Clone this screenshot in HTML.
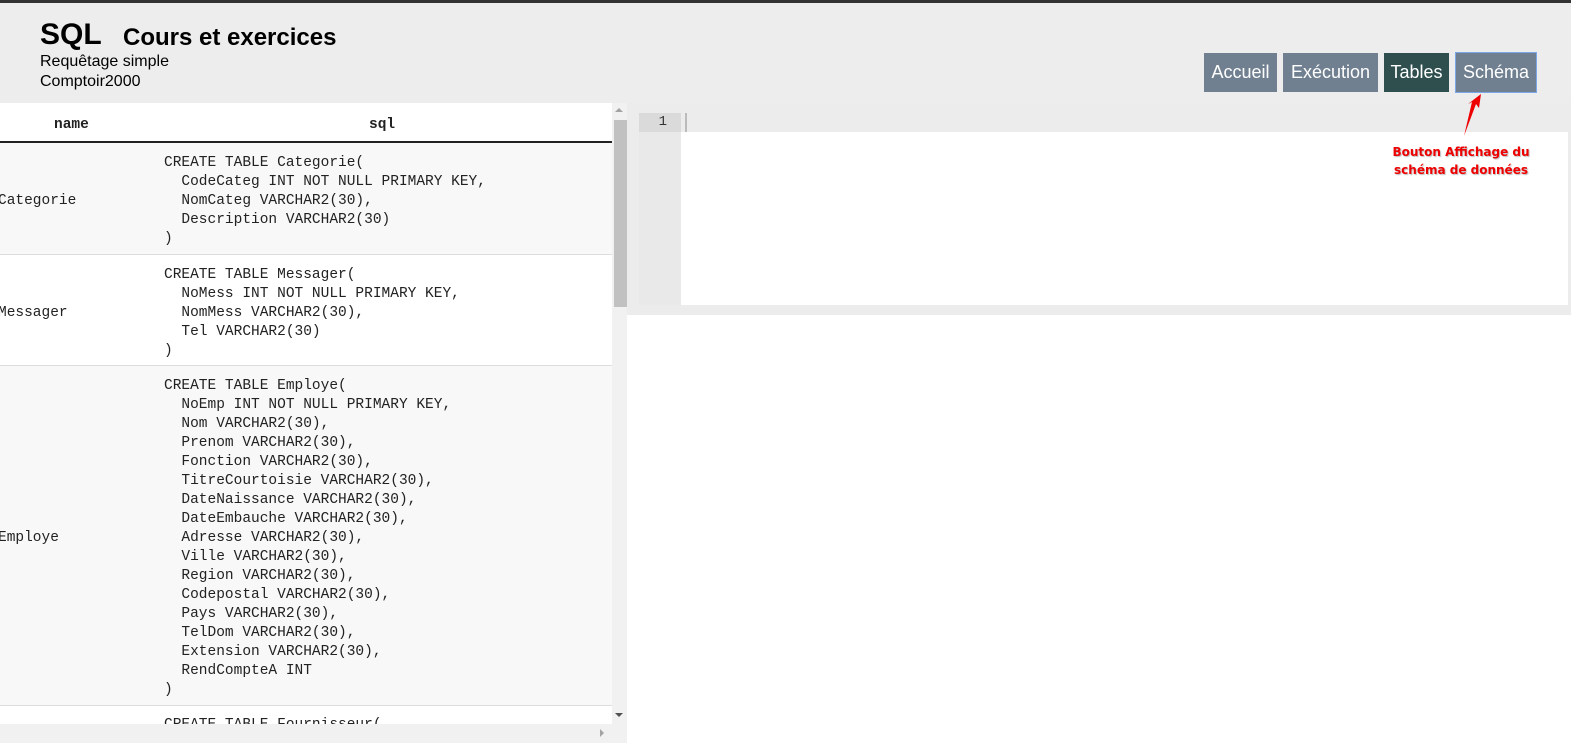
<!DOCTYPE html>
<html><head><meta charset="utf-8"><style>
body{margin:0;width:1571px;height:743px;overflow:hidden;background:#fff;font-family:"Liberation Sans",sans-serif;position:relative}
.abs{position:absolute}
.mono{font-family:"Liberation Mono",monospace;font-size:14.5px;line-height:19px;color:#222}
.btn{position:absolute;top:53px;height:39px;line-height:39px;color:#fff;font-size:18px;text-align:center;background:#708090}
</style></head><body>
<div class="abs" style="left:0;top:0;width:1571px;height:3px;background:#333"></div>
<div class="abs" style="left:0;top:3px;width:1571px;height:100px;background:#ededed"></div>
<div class="abs" style="left:40px;top:18px;font-size:30px;font-weight:bold">SQL</div>
<div class="abs" style="left:123px;top:24px;font-size:24px;font-weight:bold">Cours et exercices</div>
<div class="abs" style="left:40px;top:53px;font-size:16px">Requêtage simple</div>
<div class="abs" style="left:40px;top:73px;font-size:16px">Comptoir2000</div>
<div class="btn" style="left:1204px;width:73px">Accueil</div>
<div class="btn" style="left:1283px;width:95px">Exécution</div>
<div class="btn" style="left:1384px;width:65px;background:#2f4f4f">Tables</div>
<div class="btn" style="left:1455px;width:80px;border:1px solid #7aa7e8;top:52px">Schéma</div>

<!-- table panel -->
<div class="abs" style="left:0;top:103px;width:612px;height:621px;background:#fff;overflow:hidden">
 <div class="abs mono" style="left:54px;top:13px;font-weight:bold">name</div>
 <div class="abs mono" style="left:369px;top:13px;font-weight:bold">sql</div>
 <div class="abs" style="left:0;top:38px;width:612px;height:2px;background:#222"></div>
 <div class="abs mono" style="left:0;top:40px;width:612px;height:111px;background:#f8f8f8;border-bottom:1px solid #ddd"><div class="abs" style="left:-2px;top:49px">Categorie</div><pre class="abs mono" style="margin:0;left:164px;top:11px">CREATE TABLE Categorie(
  CodeCateg INT NOT NULL PRIMARY KEY,
  NomCateg VARCHAR2(30),
  Description VARCHAR2(30)
)</pre></div>
 <div class="abs mono" style="left:0;top:152px;width:612px;height:110px;background:#fff;border-bottom:1px solid #ddd"><div class="abs" style="left:-2px;top:49px">Messager</div><pre class="abs mono" style="margin:0;left:164px;top:11px">CREATE TABLE Messager(
  NoMess INT NOT NULL PRIMARY KEY,
  NomMess VARCHAR2(30),
  Tel VARCHAR2(30)
)</pre></div>
 <div class="abs mono" style="left:0;top:263px;width:612px;height:339px;background:#f8f8f8;border-bottom:1px solid #ddd"><div class="abs" style="left:-2px;top:163px">Employe</div><pre class="abs mono" style="margin:0;left:164px;top:11px">CREATE TABLE Employe(
  NoEmp INT NOT NULL PRIMARY KEY,
  Nom VARCHAR2(30),
  Prenom VARCHAR2(30),
  Fonction VARCHAR2(30),
  TitreCourtoisie VARCHAR2(30),
  DateNaissance VARCHAR2(30),
  DateEmbauche VARCHAR2(30),
  Adresse VARCHAR2(30),
  Ville VARCHAR2(30),
  Region VARCHAR2(30),
  Codepostal VARCHAR2(30),
  Pays VARCHAR2(30),
  TelDom VARCHAR2(30),
  Extension VARCHAR2(30),
  RendCompteA INT
)</pre></div>
 <pre class="abs mono" style="margin:0;left:164px;top:613px">CREATE TABLE Fournisseur(</pre>
</div>
<div class="abs" style="left:612px;top:103px;width:15px;height:640px;background:#f1f1f1"></div>
<div class="abs" style="left:614px;top:120px;width:13px;height:187px;background:#c1c1c1"></div>
<div class="abs" style="left:615px;top:108px;width:0;height:0;border-left:4px solid transparent;border-right:4px solid transparent;border-bottom:4px solid #a3a3a3"></div>
<div class="abs" style="left:615px;top:713px;width:0;height:0;border-left:4px solid transparent;border-right:4px solid transparent;border-top:4px solid #505050"></div>
<div class="abs" style="left:0;top:724px;width:612px;height:19px;background:#f1f1f1"></div>
<div class="abs" style="left:600px;top:729px;width:0;height:0;border-top:4px solid transparent;border-bottom:4px solid transparent;border-left:4px solid #a3a3a3"></div>

<!-- editor -->
<div class="abs" style="left:627px;top:103px;width:944px;height:212px;background:#ececec"></div>
<div class="abs" style="left:639px;top:113px;width:42px;height:192px;background:#e9e9e9"></div>
<div class="abs" style="left:639px;top:113px;width:42px;height:19px;background:#dadada;font-family:'Liberation Mono',monospace;font-size:14px;line-height:19px;text-align:right;color:#333;box-sizing:border-box;padding-right:14px">1</div>
<div class="abs" style="left:681px;top:132px;width:887px;height:173px;background:#fff"></div>
<div class="abs" style="left:685px;top:113px;width:2px;height:19px;background:#bbb"></div>
<div class="abs" style="left:629px;top:315px;width:942px;height:426px;background:#fff"></div>

<svg class="abs" style="left:1450px;top:90px" width="40" height="50"><path d="M31 4 L29 18 L26 14 L14 46 L22 12 L18 14 Z" fill="#e00"/></svg>
<div class="abs" style="left:1376px;top:143px;width:170px;text-align:center;color:#e00;font-family:'DejaVu Sans',sans-serif;font-weight:bold;font-size:12px;line-height:18px;text-shadow:1px 1px 1px #bbb">Bouton Affichage du<br>schéma de données</div>
</body></html>
